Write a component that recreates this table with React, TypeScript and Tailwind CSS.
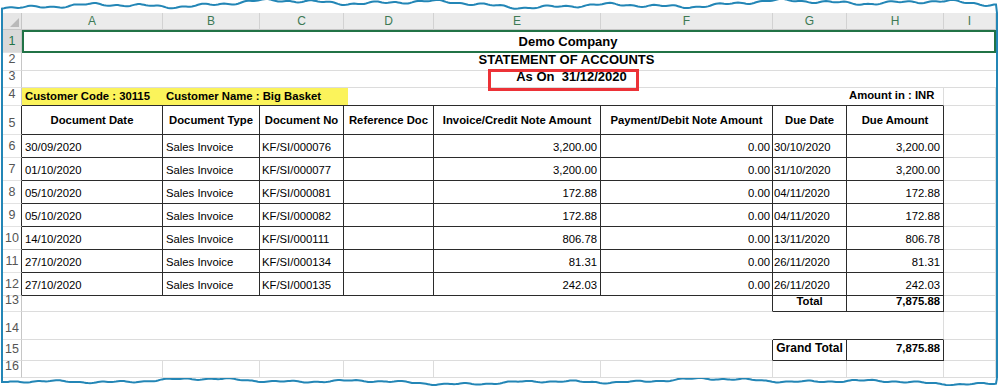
import type { ReactNode } from 'react'
import { twMerge } from 'tailwind-merge'

const W = {
  A: 'w-[141px]',
  B: 'w-[97px]',
  C: 'w-[84px]',
  D: 'w-[90px]',
  E: 'w-[167px]',
  F: 'w-[172px]',
  G: 'w-[74px]',
  H: 'w-[97px]',
  I: 'w-[52px]',
}
type Col = keyof typeof W
const cols = Object.keys(W) as Col[]

const rows = [
  ['30/09/2020', 'KF/SI/000076', '3,200.00', '30/10/2020', '3,200.00'],
  ['01/10/2020', 'KF/SI/000077', '3,200.00', '31/10/2020', '3,200.00'],
  ['05/10/2020', 'KF/SI/000081', '172.88', '04/11/2020', '172.88'],
  ['05/10/2020', 'KF/SI/000082', '172.88', '04/11/2020', '172.88'],
  ['14/10/2020', 'KF/SI/000111', '806.78', '13/11/2020', '806.78'],
  ['27/10/2020', 'KF/SI/000134', '81.31', '26/11/2020', '81.31'],
  ['27/10/2020', 'KF/SI/000135', '242.03', '26/11/2020', '242.03'],
]

// torn paper edge
const wave = (base: number, amp: number, seed: number) => {
  const pts: string[] = []
  for (let x = 2; x <= 997; x += 2) {
    const y =
      base +
      amp *
        (Math.sin(x * 0.0123 + seed) * 0.4 +
          Math.sin(x * 0.0371 + seed * 1.7) * 0.3 +
          Math.sin(x * 0.109 + seed * 2.3) * 0.18 +
          Math.sin(x * 0.293 + seed * 3.1) * 0.12)
    pts.push(`${x},${y.toFixed(1)}`)
  }
  return pts.join(' L')
}

function Cell({ w, className, children }: { w: string; className?: string; children?: ReactNode }) {
  return (
    <div
      className={twMerge(
        'h-full shrink-0 flex items-end pb-[1px] px-[3px] whitespace-nowrap border-r border-b border-[#dcdcdc]',
        w,
        className,
      )}
    >
      {children}
    </div>
  )
}

function RowHead({ n, active, edge }: { n: number; active?: boolean; edge?: boolean }) {
  return (
    <div
      className={twMerge(
        'w-[19px] h-full shrink-0 flex items-end justify-center pb-[1px] font-normal text-[12.5px] text-[#555] bg-white border-r border-b border-r-[#c6c6c6] border-b-[#e2e2e2]',
        active && 'bg-[#d9d9d9] text-[#217346]',
        edge && 'border-r-[#2b2b2b]',
      )}
    >
      {n}
    </div>
  )
}

export default function App() {
  const ink = 'border-[#2b2b2b]'
  return (
    <div className="relative w-[1000px] h-[386px] overflow-hidden bg-white text-black font-['Liberation_Sans',Arial,sans-serif]">
      <svg width="1000" height="13" className="block">
        <path d={`M2,13 L${wave(4, 6, 0.6)} L997,13`} fill="none" stroke="#2386b6" strokeWidth="2" />
      </svg>

      <div className="flex h-[365px]">
        <div className="w-[1px] shrink-0" />
        <div className="w-[2px] shrink-0 bg-[#2386b6]" />

        <div className="w-[993px] shrink-0 flex flex-col text-[11.3px]">
          {/* column headers */}
          <div className="flex h-[17px] shrink-0">
            <div className="w-[19px] shrink-0 bg-[#e6e6e6] border-r border-b border-[#c6c6c6] flex items-end justify-end p-[2px]">
              <svg width="9" height="9">
                <polygon points="9,0 9,9 0,9" fill="#b9b9b9" />
              </svg>
            </div>
            {cols.map((c) => (
              <div
                key={c}
                className={twMerge(
                  W[c],
                  'shrink-0 bg-[#ebebeb] border-r border-[#d2d2d2] border-b border-b-[#c6c6c6] flex items-center justify-center text-[12px] text-[#3d7a55]',
                )}
              >
                {c}
              </div>
            ))}
          </div>

          {/* row 1 */}
          <div className="flex h-[23px] shrink-0">
            <RowHead n={1} active />
            <div className="w-[974px] shrink-0 border-2 border-[#217346] flex items-center justify-center pl-[118px] font-bold text-[13px]">
              Demo Company
            </div>
          </div>

          {/* row 2 */}
          <div className="flex h-[18px] shrink-0">
            <RowHead n={2} />
            <Cell w="w-[974px]" className="border-r-0 justify-center pl-[118px] pb-[1px] font-bold text-[13px]">
              STATEMENT OF ACCOUNTS
            </Cell>
          </div>

          {/* row 3 */}
          <div className="flex h-[17px] shrink-0">
            <RowHead n={3} />
            <Cell w="w-[974px]" className="border-r-0 justify-center pl-[128px] pb-[1px] font-bold text-[13px]">
              As On&nbsp;&nbsp;31/12/2020
            </Cell>
          </div>

          {/* row 4 */}
          <div className="flex h-[18px] shrink-0 font-bold">
            <RowHead n={4} />
            <div className={twMerge('w-[326px] shrink-0 h-full bg-[#fbf35b] flex items-center border-b', ink)}>
              <span className="w-[141px] pl-[3px]">Customer Code : 30115</span>
              <span className="pl-[3px]">Customer Name : Big Basket</span>
            </div>
            <Cell w="w-[425px]" className={twMerge('border-r-0', ink)} />
            <Cell w={W.G} className={twMerge('border-r-0', ink)} />
            <Cell w={W.H} className="border-b-[#2b2b2b] px-[2px]">
              Amount in : INR
            </Cell>
            <Cell w={W.I} />
          </div>

          {/* row 5 : table head */}
          <div className="flex h-[29px] shrink-0 font-bold">
            <RowHead n={5} edge />
            {[
              ['A', 'Document Date'],
              ['B', 'Document Type'],
              ['C', 'Document No'],
              ['D', 'Reference Doc'],
              ['E', 'Invoice/Credit Note Amount'],
              ['F', 'Payment/Debit Note Amount'],
              ['G', 'Due Date'],
              ['H', 'Due Amount'],
            ].map(([c, t]) => (
              <Cell key={c} w={W[c as Col]} className={twMerge(ink, 'items-center justify-center pb-0 px-0')}>
                {t}
              </Cell>
            ))}
            <Cell w={W.I} />
          </div>

          {/* rows 6-12 */}
          {rows.map((r, i) => (
            <div key={i} className="flex h-[23px] shrink-0">
              <RowHead n={i + 6} edge />
              <Cell w={W.A} className={ink}>{r[0]}</Cell>
              <Cell w={W.B} className={ink}>Sales Invoice</Cell>
              <Cell w={W.C} className={twMerge(ink, 'px-[2px]')}>{r[1]}</Cell>
              <Cell w={W.D} className={ink} />
              <Cell w={W.E} className={twMerge(ink, 'justify-end')}>{r[2]}</Cell>
              <Cell w={W.F} className={twMerge(ink, 'justify-end px-[2px]')}>0.00</Cell>
              <Cell w={W.G} className={twMerge(ink, 'px-[1px]')}>{r[3]}</Cell>
              <Cell w={W.H} className={twMerge(ink, 'justify-end')}>{r[4]}</Cell>
              <Cell w={W.I} />
            </div>
          ))}

          {/* row 13 */}
          <div className="flex h-[16px] shrink-0 font-bold">
            <RowHead n={13} />
            <Cell w="w-[751px]" className="border-r-[#2b2b2b]" />
            <Cell w={W.G} className={twMerge(ink, 'justify-center pb-[1px]')}>Total</Cell>
            <Cell w={W.H} className={twMerge(ink, 'justify-end pb-[1px]')}>7,875.88</Cell>
            <Cell w={W.I} />
          </div>

          {/* row 14 */}
          <div className="flex h-[28px] shrink-0">
            <RowHead n={14} />
            <Cell w="w-[751px]" className="border-r-0" />
            <Cell w={W.G} className="border-r-0 border-b-[#2b2b2b]" />
            <Cell w={W.H} className="border-b-[#2b2b2b]" />
            <Cell w={W.I} />
          </div>

          {/* row 15 */}
          <div className="flex h-[21px] shrink-0 font-bold">
            <RowHead n={15} />
            <Cell w="w-[751px]" className="border-r-[#2b2b2b]" />
            <Cell w={W.G} className={twMerge(ink, 'justify-center pb-[3px] text-[12px]')}>Grand Total</Cell>
            <Cell w={W.H} className={twMerge(ink, 'justify-end pb-[3px]')}>7,875.88</Cell>
            <Cell w={W.I} />
          </div>

          {/* row 16 */}
          <div className="flex h-[17px] shrink-0">
            <RowHead n={16} />
            {cols.map((c) => (
              <Cell key={c} w={W[c]} />
            ))}
          </div>
        </div>

        <div className="w-[2px] shrink-0 bg-[#2386b6]" />
      </div>

      <svg width="1000" height="8" className="block">
        <path d={`M2,0 L${wave(3.5, 4, 2.1)} L997,0`} fill="none" stroke="#2386b6" strokeWidth="2" />
      </svg>

      {/* red annotation box */}
      <div className="absolute left-[488px] top-[69px] w-[151px] h-[22px] border-[3px] border-[#ec3237]" />
    </div>
  )
}
